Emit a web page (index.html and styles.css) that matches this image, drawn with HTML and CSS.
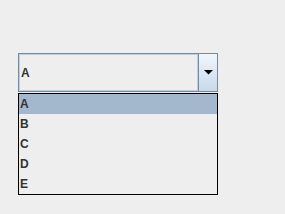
FILE: index.html
```html
<!DOCTYPE html>
<html lang="en">
<head>
  <meta charset="UTF-8" />
  <title>Combo</title>
  <link rel="stylesheet" href="styles.css">
</head>
<body>
  <div class="frame">
    <div class="combo-wrap">
      <div class="combo">
        <div class="combo-field">A</div>
        <div class="combo-button">
          <svg width="9" height="5" viewBox="0 0 9 5"><polygon points="0,0 9,0 4.5,4.5" fill="#000"/></svg>
        </div>
      </div>
      <div class="popup">
        <div class="item selected">A</div>
        <div class="item">B</div>
        <div class="item">C</div>
        <div class="item">D</div>
        <div class="item">E</div>
      </div>
    </div>
  </div>
</body>
</html>
```

FILE: styles.css
```css
:root {
  --bg: #eeeeee;
  --border: #7a8a99;
  --inner: #b8cfe5;
  --select: #a3b8cc;
}

body {
  margin: 0;
  background: var(--bg);
  font-family: "Liberation Sans", Arial, sans-serif;
  font-size: 12px;
  font-weight: bold;
  color: #333333;
}

.frame {
  padding: 53px 0 0 18px;
}

.combo-wrap {
  width: 200px;
}

.combo {
  display: flex;
  height: 39px;
  box-sizing: border-box;
  border: 1px solid var(--border);
}

.combo-field {
  flex: 1;
  display: flex;
  align-items: center;
  padding-left: 1px;
  border: 1px solid var(--inner);
  background: var(--bg);
}

.combo-button {
  width: 18px;
  display: flex;
  align-items: center;
  justify-content: center;
  border-left: 1px solid var(--border);
  background: linear-gradient(#f2f6fb, #c6d9eb);
}

.popup {
  margin-top: 1px;
  border: 1px solid #000;
  background: var(--bg);
}

.item {
  height: 20px;
  line-height: 20px;
  padding-left: 1px;
}

.item.selected {
  background: var(--select);
}
```
